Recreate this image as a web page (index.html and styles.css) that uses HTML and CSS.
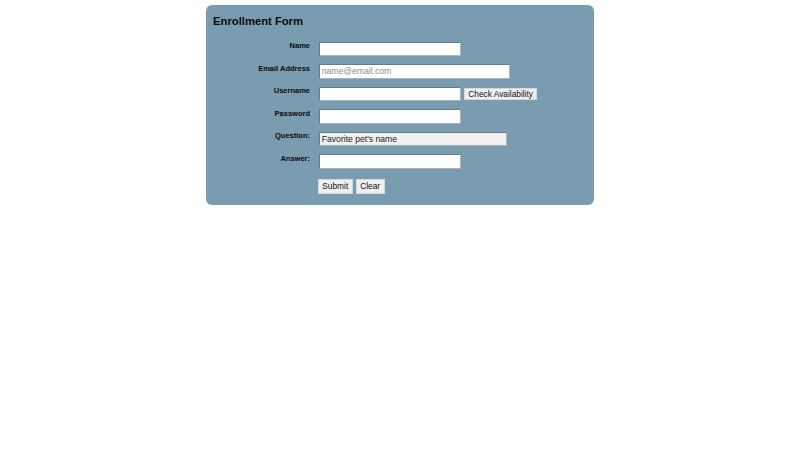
FILE: index.html
```html
<!DOCTYPE html>
<html>
<head>
<meta charset="utf-8">
<link rel="stylesheet" href="styles.css">
</head>
<body>
<form class="card">
  <h1 class="title">Enrollment Form</h1>
  <div class="rows">
    <label class="lbl" for="name">Name</label>
    <div class="field"><input id="name" class="inp" type="text"></div>

    <label class="lbl" for="email">Email Address</label>
    <div class="field"><input id="email" class="inp inp-wide" type="text" placeholder="name@email.com"></div>

    <label class="lbl" for="user">Username</label>
    <div class="field"><input id="user" class="inp" type="text"><button type="button" class="btn btn-check">Check Availability</button></div>

    <label class="lbl" for="pw">Password</label>
    <div class="field"><input id="pw" class="inp" type="password"></div>

    <label class="lbl" for="q">Question:</label>
    <div class="field"><input id="q" class="inp inp-q" type="text" value="Favorite pet's name" readonly></div>

    <label class="lbl" for="a">Answer:</label>
    <div class="field"><input id="a" class="inp" type="text"></div>

    <span></span>
    <div class="field actions"><button type="submit" class="btn btn-act">Submit</button><button type="reset" class="btn btn-act">Clear</button></div>
  </div>
</form>
</body>
</html>
```

FILE: styles.css
```css
html, body {
  margin: 0;
  padding: 0;
  background: #ffffff;
}
body {
  font-family: "Liberation Sans", Arial, sans-serif;
  color: #000;
}
.card {
  width: 388px;
  height: 200px;
  box-sizing: border-box;
  margin: 5px auto 0;
  padding: 9px 7px 0;
  background: #7a9cb0;
  border-radius: 6px;
}
.title {
  font-size: 11.25px;
  font-weight: bold;
  line-height: 14px;
  margin: 0 0 13.5px;
  color: #0a0a0a;
}
.rows {
  display: grid;
  grid-template-columns: 97px 1fr;
  column-gap: 9.3px;
  row-gap: 8.1px;
  align-items: start;
}
.lbl {
  font-size: 7.5px;
  font-weight: bold;
  text-align: right;
  line-height: 9px;
  margin-top: -0.5px;
  color: #0a0a0a;
}
.field {
  display: flex;
  align-items: flex-start;
  gap: 3px;
  height: 14.5px;
}
.inp {
  box-sizing: border-box;
  width: 141.5px;
  height: 14.5px;
  margin: 0;
  padding: 0 1.5px;
  font-family: "Liberation Sans", Arial, sans-serif;
  font-size: 8.6px;
  border: 1px solid #a9b3b8;
  border-top-color: #6b7880;
  border-left-color: #6b7880;
  background: #ffffff;
  outline: none;
  color: #000;
}
.inp::placeholder {
  color: #8d8d8d;
}
.inp-wide {
  width: 191px;
}
.inp-q {
  width: 187.5px;
  background: #f0f0f0;
  color: #1a1a1a;
}
.btn {
  box-sizing: border-box;
  margin: 0;
  padding: 0 3.5px;
  font-family: "Liberation Sans", Arial, sans-serif;
  font-size: 8.33px;
  line-height: 10px;
  background: #efefef;
  border: 1px solid #d4d8da;
  color: #111;
}
.btn-check {
  height: 12.5px;
  margin-top: 1px;
}
.actions {
  margin-top: 1.5px;
  margin-left: -1.5px;
  height: 15px;
}
.btn-act {
  height: 15px;
}
```
